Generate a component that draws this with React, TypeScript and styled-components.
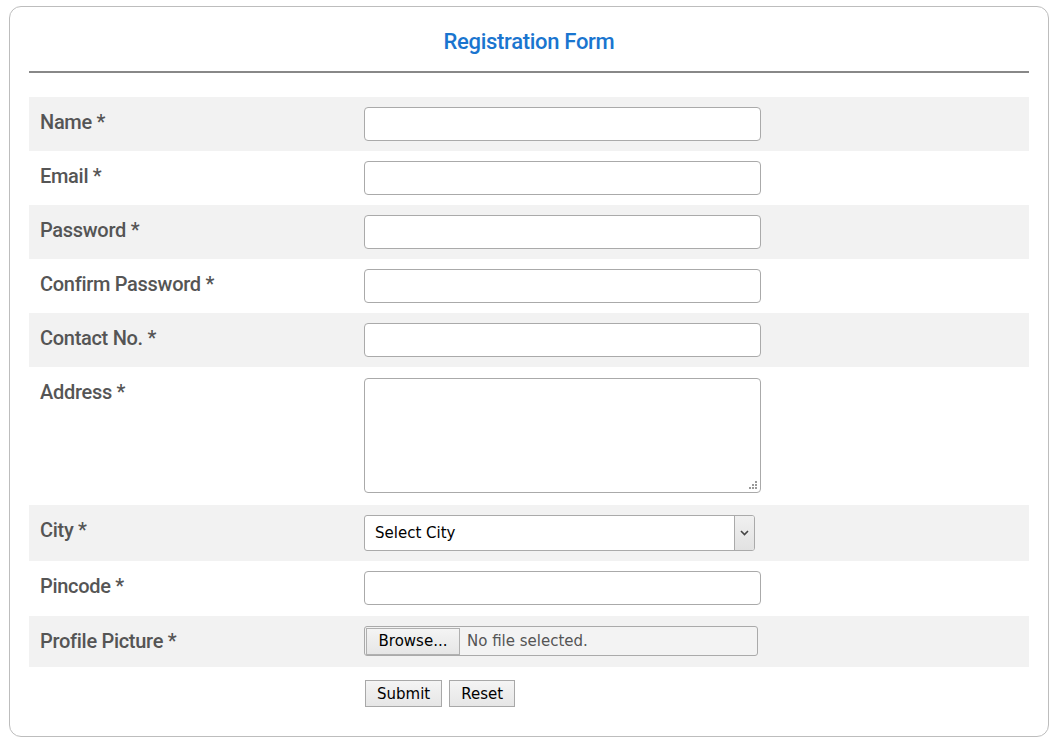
import * as React from 'react'
import styled, { createGlobalStyle } from 'styled-components'

const GlobalStyle = createGlobalStyle`
  body {
    margin: 0;
    background: #fff;
    font-family: Roboto, "Liberation Sans", sans-serif;
  }
`

const Page = styled.div`
  padding: 6px 14px 8px 9px;
`

const Card = styled.div`
  border: 1px solid #bdbdbd;
  border-radius: 12px;
  padding: 0 19px;
  height: 731px;
  box-sizing: border-box;
`

const Header = styled.h1`
  margin: 0 0 24px;
  padding: 22px 0 16px;
  border-bottom: 2px solid #888;
  text-align: center;
  font-size: 22px;
  line-height: 26px;
  font-weight: 500;
  letter-spacing: -0.3px;
  color: #1a75cf;
`

const Row = styled.div<{ $shaded?: boolean; $padBottom?: number }>`
  display: flex;
  align-items: flex-start;
  padding: 10px 0 ${(p) => p.$padBottom ?? 10}px;
  background: ${(p) => (p.$shaded ? '#f2f2f2' : 'transparent')};
`

const Label = styled.label`
  width: 324px;
  padding-left: 11px;
  font-size: 20px;
  line-height: 30px;
  font-weight: 500;
  letter-spacing: -0.3px;
  color: #555;
`

const TextInput = styled.input`
  width: 397px;
  height: 34px;
  box-sizing: border-box;
  border: 1px solid #aaa;
  border-radius: 4px;
  background: #fff;
  margin: 0;
`

const AreaWrap = styled.div`
  position: relative;
  margin: 1px 0 2px;
`

const TextArea = styled.textarea`
  display: block;
  width: 397px;
  height: 115px;
  box-sizing: border-box;
  border: 1px solid #aaa;
  border-radius: 4px;
  resize: none;
  margin: 0;
`

const Grip = styled.svg`
  position: absolute;
  right: 4px;
  bottom: 4px;
`

const SelectWrap = styled.div`
  position: relative;
  width: 391px;
  height: 36px;
`

const Select = styled.select`
  appearance: none;
  width: 100%;
  height: 100%;
  box-sizing: border-box;
  border: 1px solid #aaa;
  border-radius: 3px;
  background: #fff;
  padding: 0 0 0 10px;
  font-family: "DejaVu Sans", Verdana, sans-serif;
  font-size: 15px;
  color: #000;
  margin: 0;
`

const Arrow = styled.span`
  position: absolute;
  top: 1px;
  right: 1px;
  bottom: 1px;
  width: 19px;
  border-left: 1px solid #aaa;
  border-radius: 0 2px 2px 0;
  background: linear-gradient(#f0f0f0, #e2e2e2);
  display: flex;
  align-items: center;
  justify-content: center;
  pointer-events: none;
`

const FileBox = styled.div`
  width: 394px;
  height: 30px;
  box-sizing: border-box;
  border: 1px solid #aaa;
  border-radius: 3px;
  background: #f3f3f3;
  display: flex;
  align-items: center;
  padding-left: 1px;
  gap: 7px;
  font-family: "DejaVu Sans", Verdana, sans-serif;
  font-size: 15px;
  color: #555;
`

const Button = styled.button`
  height: 27px;
  padding: 0 11px;
  border: 1px solid #a8a8a8;
  border-radius: 0;
  background: linear-gradient(#f4f4f4, #e6e6e6);
  font-family: "DejaVu Sans", Verdana, sans-serif;
  font-size: 15px;
  color: #000;
  margin: 0;
`

const BrowseButton = styled(Button)`
  height: 27px;
  width: 94px;
  padding: 0;
  border-color: #b0b0b0;
`

const Actions = styled.div`
  display: flex;
  gap: 7px;
  padding: 13px 0 0 336px;
`

const fields: Array<{ label: string; type: string }> = [
  { label: 'Name *', type: 'text' },
  { label: 'Email *', type: 'email' },
  { label: 'Password *', type: 'password' },
  { label: 'Confirm Password *', type: 'password' },
  { label: 'Contact No. *', type: 'text' },
]

const App: React.FC = () => {
  return (
    <Page>
      <GlobalStyle />
      <Card>
        <Header>Registration Form</Header>
        {fields.map(({ label, type }, idx) => (
          <Row key={`field-${idx}`} $shaded={idx % 2 === 0}>
            <Label>{label}</Label>
            <TextInput type={type} />
          </Row>
        ))}
        <Row>
          <Label>Address *</Label>
          <AreaWrap>
            <TextArea />
            <Grip width="8" height="8" viewBox="0 0 8 8">
              <g fill="#9a9a9a">
                <rect x="6" y="0" width="2" height="2" />
                <rect x="3" y="3" width="2" height="2" />
                <rect x="6" y="3" width="2" height="2" />
                <rect x="0" y="6" width="2" height="2" />
                <rect x="3" y="6" width="2" height="2" />
                <rect x="6" y="6" width="2" height="2" />
              </g>
            </Grip>
          </AreaWrap>
        </Row>
        <Row $shaded>
          <Label>City *</Label>
          <SelectWrap>
            <Select defaultValue="">
              <option value="">Select City</option>
            </Select>
            <Arrow>
              <svg width="9" height="6" viewBox="0 0 9 6">
                <path d="M1 1 L4.5 4.5 L8 1" fill="none" stroke="#444" strokeWidth="1.6" />
              </svg>
            </Arrow>
          </SelectWrap>
        </Row>
        <Row $padBottom={11}>
          <Label>Pincode *</Label>
          <TextInput type="text" />
        </Row>
        <Row $shaded $padBottom={11}>
          <Label>Profile Picture *</Label>
          <FileBox>
            <BrowseButton type="button">Browse...</BrowseButton>
            <span>No file selected.</span>
          </FileBox>
        </Row>
        <Actions>
          <Button type="submit">Submit</Button>
          <Button type="reset">Reset</Button>
        </Actions>
      </Card>
    </Page>
  )
}

export default App
